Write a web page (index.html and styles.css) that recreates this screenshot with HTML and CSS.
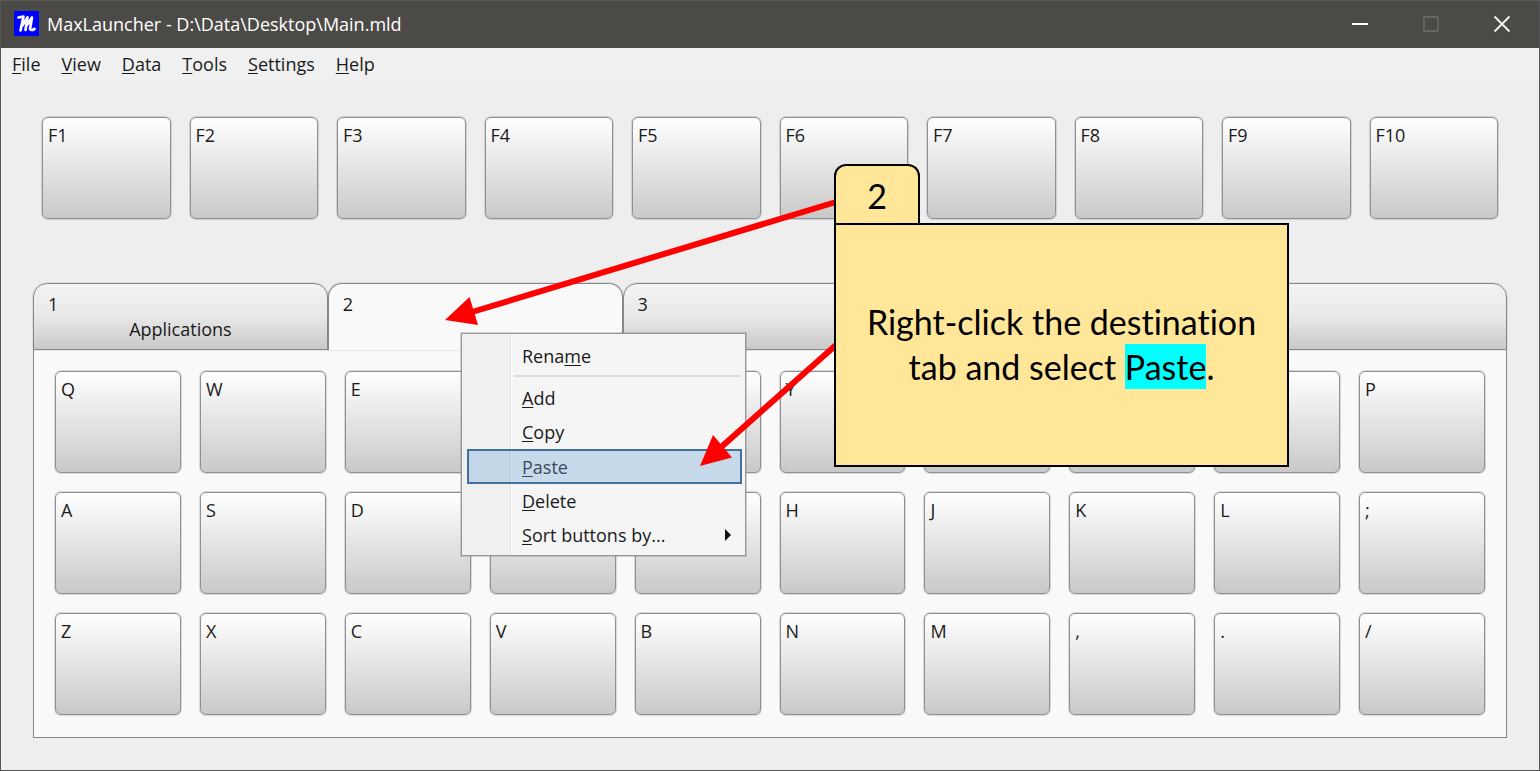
FILE: index.html
```html
<!DOCTYPE html>
<html lang="en">
<head>
    <meta charset="UTF-8">
    <meta name="viewport" content="width=device-width, initial-scale=1.0">
    <title>MaxLauncher</title>
    <link rel="stylesheet" href="styles.css">
</head>
<body>

    <div class="window">
        <!-- Title bar -->
        <header class="titlebar">
            <svg class="logo" viewBox="0 0 25 25" aria-hidden="true">
                <rect width="25" height="25" fill="#0000ff"/>
                <path d="M4.500 6.500L9.500 5.500L6.500 19.500M8 15L13.500 6.500L11.500 19M13 14L18 6.500L16 18Q17 20 20.500 18" fill="none" stroke="#fff" stroke-width="2.700" stroke-linecap="round" stroke-linejoin="round"/>
            </svg>
            <h1>MaxLauncher - D:\Data\Desktop\Main.mld</h1>
            <div class="window-buttons">
                <button type="button" aria-label="Minimize">
                    <svg viewBox="0 0 18 18"><path d="M1 9h16" stroke="#fff" stroke-width="2"/></svg>
                </button>
                <button type="button" aria-label="Maximize" disabled>
                    <svg viewBox="0 0 18 18"><path d="M2 2h14v14H2z" fill="none" stroke="#71706e" stroke-width="1.300"/></svg>
                </button>
                <button type="button" aria-label="Close">
                    <svg viewBox="0 0 18 18"><path d="M1.500 1.500l15 15M16.500 1.500l-15 15" stroke="#f2f2f2" stroke-width="1.900"/></svg>
                </button>
            </div>
        </header>

        <!-- Menu bar -->
        <nav class="menubar">
            <button type="button"><u>F</u>ile</button>
            <button type="button"><u>V</u>iew</button>
            <button type="button"><u>D</u>ata</button>
            <button type="button"><u>T</u>ools</button>
            <button type="button"><u>S</u>ettings</button>
            <button type="button"><u>H</u>elp</button>
        </nav>

        <main>
            <!-- Function keys -->
            <div class="function-keys">
                <button type="button" class="key">F1</button>
                <button type="button" class="key">F2</button>
                <button type="button" class="key">F3</button>
                <button type="button" class="key">F4</button>
                <button type="button" class="key">F5</button>
                <button type="button" class="key">F6</button>
                <button type="button" class="key">F7</button>
                <button type="button" class="key">F8</button>
                <button type="button" class="key">F9</button>
                <button type="button" class="key">F10</button>
            </div>

            <!-- Tabs -->
            <div class="tabs" role="tablist">
                <button type="button" class="tab" role="tab"><span>1</span><span class="tab-name">Applications</span></button>
                <button type="button" class="tab selected" role="tab" aria-selected="true"><span>2</span></button>
                <button type="button" class="tab" role="tab"><span>3</span></button>
                <button type="button" class="tab" role="tab" aria-label="4"></button>
                <button type="button" class="tab" role="tab" aria-label="5"></button>
            </div>

            <div class="panel" role="tabpanel">
                <button type="button" class="key">Q</button>
                <button type="button" class="key">W</button>
                <button type="button" class="key">E</button>
                <button type="button" class="key" aria-label="R"></button>
                <button type="button" class="key" aria-label="T"></button>
                <button type="button" class="key">Y</button>
                <button type="button" class="key" aria-label="U"></button>
                <button type="button" class="key" aria-label="I"></button>
                <button type="button" class="key" aria-label="O"></button>
                <button type="button" class="key">P</button>

                <button type="button" class="key">A</button>
                <button type="button" class="key">S</button>
                <button type="button" class="key">D</button>
                <button type="button" class="key" aria-label="F"></button>
                <button type="button" class="key" aria-label="G"></button>
                <button type="button" class="key">H</button>
                <button type="button" class="key">J</button>
                <button type="button" class="key">K</button>
                <button type="button" class="key">L</button>
                <button type="button" class="key">;</button>

                <button type="button" class="key">Z</button>
                <button type="button" class="key">X</button>
                <button type="button" class="key">C</button>
                <button type="button" class="key">V</button>
                <button type="button" class="key">B</button>
                <button type="button" class="key">N</button>
                <button type="button" class="key">M</button>
                <button type="button" class="key">,</button>
                <button type="button" class="key">.</button>
                <button type="button" class="key">/</button>
            </div>
        </main>
    </div>

    <!-- Right-click menu of the tab -->
    <div class="context-menu" role="menu">
        <button type="button" role="menuitem">Rena<u>m</u>e</button>
        <hr>
        <button type="button" role="menuitem"><u>A</u>dd</button>
        <button type="button" role="menuitem"><u>C</u>opy</button>
        <button type="button" role="menuitem" class="active"><u>P</u>aste</button>
        <button type="button" role="menuitem"><u>D</u>elete</button>
        <button type="button" role="menuitem" class="submenu"><u>S</u>ort buttons by...</button>
    </div>

    <!-- Arrows from the note to the tab and to Paste -->
    <svg class="arrows" width="400" height="280" viewBox="440 195 400 280" aria-hidden="true">
        <path d="M836 202L472 312M836 345L719 449" stroke="#f00" stroke-width="6"/>
        <path d="M445 320L469.500 297L478 325zM700 466L713 435L732 457.500z" fill="#f00"/>
    </svg>

    <!-- Step note -->
    <aside class="note">
        <div class="note-number">2</div>
        <p class="note-text">Right-click the destination<br>tab and select <mark>Paste</mark>.</p>
    </aside>

</body>
</html>
```

FILE: styles.css
```css
* {
    box-sizing: border-box;
}

body {
    margin: 0;
    font-family: "Open Sans", "Noto Sans", sans-serif;
    font-size: 18px;
    line-height: 24px;
    color: #1a1a1a;
}

button {
    margin: 0;
    padding: 0;
    border: none;
    background: none;
    font: inherit;
    color: inherit;
    text-align: left;
}

u {
    text-underline-offset: 2px;
    text-decoration-thickness: 1px;
    text-decoration-skip-ink: none;
}

.window {
    min-height: 100vh;
    border: 1px solid #555;
    border-top-width: 0;
    background: #eee;
}

/* Title bar */
.titlebar {
    display: flex;
    align-items: center;
    height: 48px;
    padding: 0 2px 2px 13px;
    border-top: 1px solid #5a5957;
    background: #4b4a47;
    color: #fff;
}

.logo {
    width: 25px;
    height: 25px;
}

.titlebar h1 {
    margin: 0 auto 0 8px;
    font-size: 18px;
    font-weight: normal;
}

.window-buttons {
    display: flex;
}

.window-buttons button {
    display: flex;
    align-items: center;
    justify-content: center;
    width: 71px;
    height: 45px;
}

.window-buttons svg {
    width: 18px;
    height: 18px;
}

/* Menu bar */
.menubar {
    display: flex;
    gap: 21px;
    padding: 4px 11px;
    background: #f0f0f0;
}

/* Keys */
.key {
    display: flex;
    align-items: flex-start;
    height: 102px;
    padding: 5px;
    border: 1px solid #909096;
    border-radius: 6px;
    background: linear-gradient(#fff, #c9c9c9);
    box-shadow: 0 0 0 1px rgba(120, 120, 130, 0.25);
}

.function-keys {
    display: grid;
    grid-template-columns: repeat(10, 1fr);
    gap: 19px;
    padding: 37px 41px 64px;
}

/* Tabs */
.tabs {
    display: flex;
    margin: 0 32px;
}

.tab {
    display: flex;
    flex: 1;
    flex-direction: column;
    gap: 1px;
    height: 67px;
    padding: 8px 14px;
    border: 1px solid #888;
    border-radius: 14px 14px 0 0;
    background: linear-gradient(#f3f3f3, #e8e8e8 50%, #c9c9c9);
    box-shadow: 0 0 0 1px rgba(120, 120, 120, 0.15);
}

.tab.selected {
    border-bottom: none;
    background: #f9f9f9;
}

.tab-name {
    align-self: center;
}

.panel {
    display: grid;
    grid-template-columns: repeat(10, 1fr);
    gap: 19px;
    margin: 0 32px 32px;
    padding: 21px 21px 22px;
    border: 1px solid #888;
    border-top: none;
    background: #f9f9f9;
}

/* Context menu */
.context-menu {
    position: absolute;
    top: 333px;
    left: 461px;
    width: 285px;
    padding: 5px 3px 3px 5px;
    border: 1px solid #979797;
    background: linear-gradient(to right, #f0f0f0 48px, #e0e0e0 48px, #e0e0e0 49px, #fff 49px, #fff 50px, #f5f5f5 50px);
    box-shadow: 0 0 0 1px rgba(120, 120, 120, 0.3);
}

.context-menu button {
    display: flex;
    width: 100%;
    height: 34px;
    padding-left: 55px;
    align-items: center;
    white-space: pre;
}

.context-menu hr {
    height: 2px;
    margin: 2px 2px 4px 47px;
    border: none;
    background: #dadada;
}

.context-menu .active {
    height: 35px;
    padding-left: 53px;
    border: 2px solid #41719c;
    background: rgba(91, 155, 213, 0.3);
    color: #3a4a5c;
}

.context-menu .submenu::after {
    content: "";
    margin: 0 11px 0 auto;
    border: 6px solid transparent;
    border-left-color: #111;
    border-right: none;
}

.arrows {
    position: absolute;
    top: 195px;
    left: 440px;
}

/* Note */
.note {
    position: absolute;
    top: 164px;
    left: 834px;
    width: 455px;
    font-family: Lato, sans-serif;
    font-size: 34px;
    font-variant-ligatures: none;
    line-height: 45px;
    color: #000;
    text-align: center;
}

.note-number {
    width: 86px;
    padding: 7px 0;
    border: 2px solid #000;
    border-bottom: none;
    border-radius: 12px 12px 0 0;
    background: #ffe699;
}

.note-text {
    margin: -2px 0 0;
    padding: 74px 0 76px;
    border: 2px solid #000;
    background: #ffe699;
}

.note-text mark {
    display: inline-block;
    background: #0ff;
    color: inherit;
}
```
